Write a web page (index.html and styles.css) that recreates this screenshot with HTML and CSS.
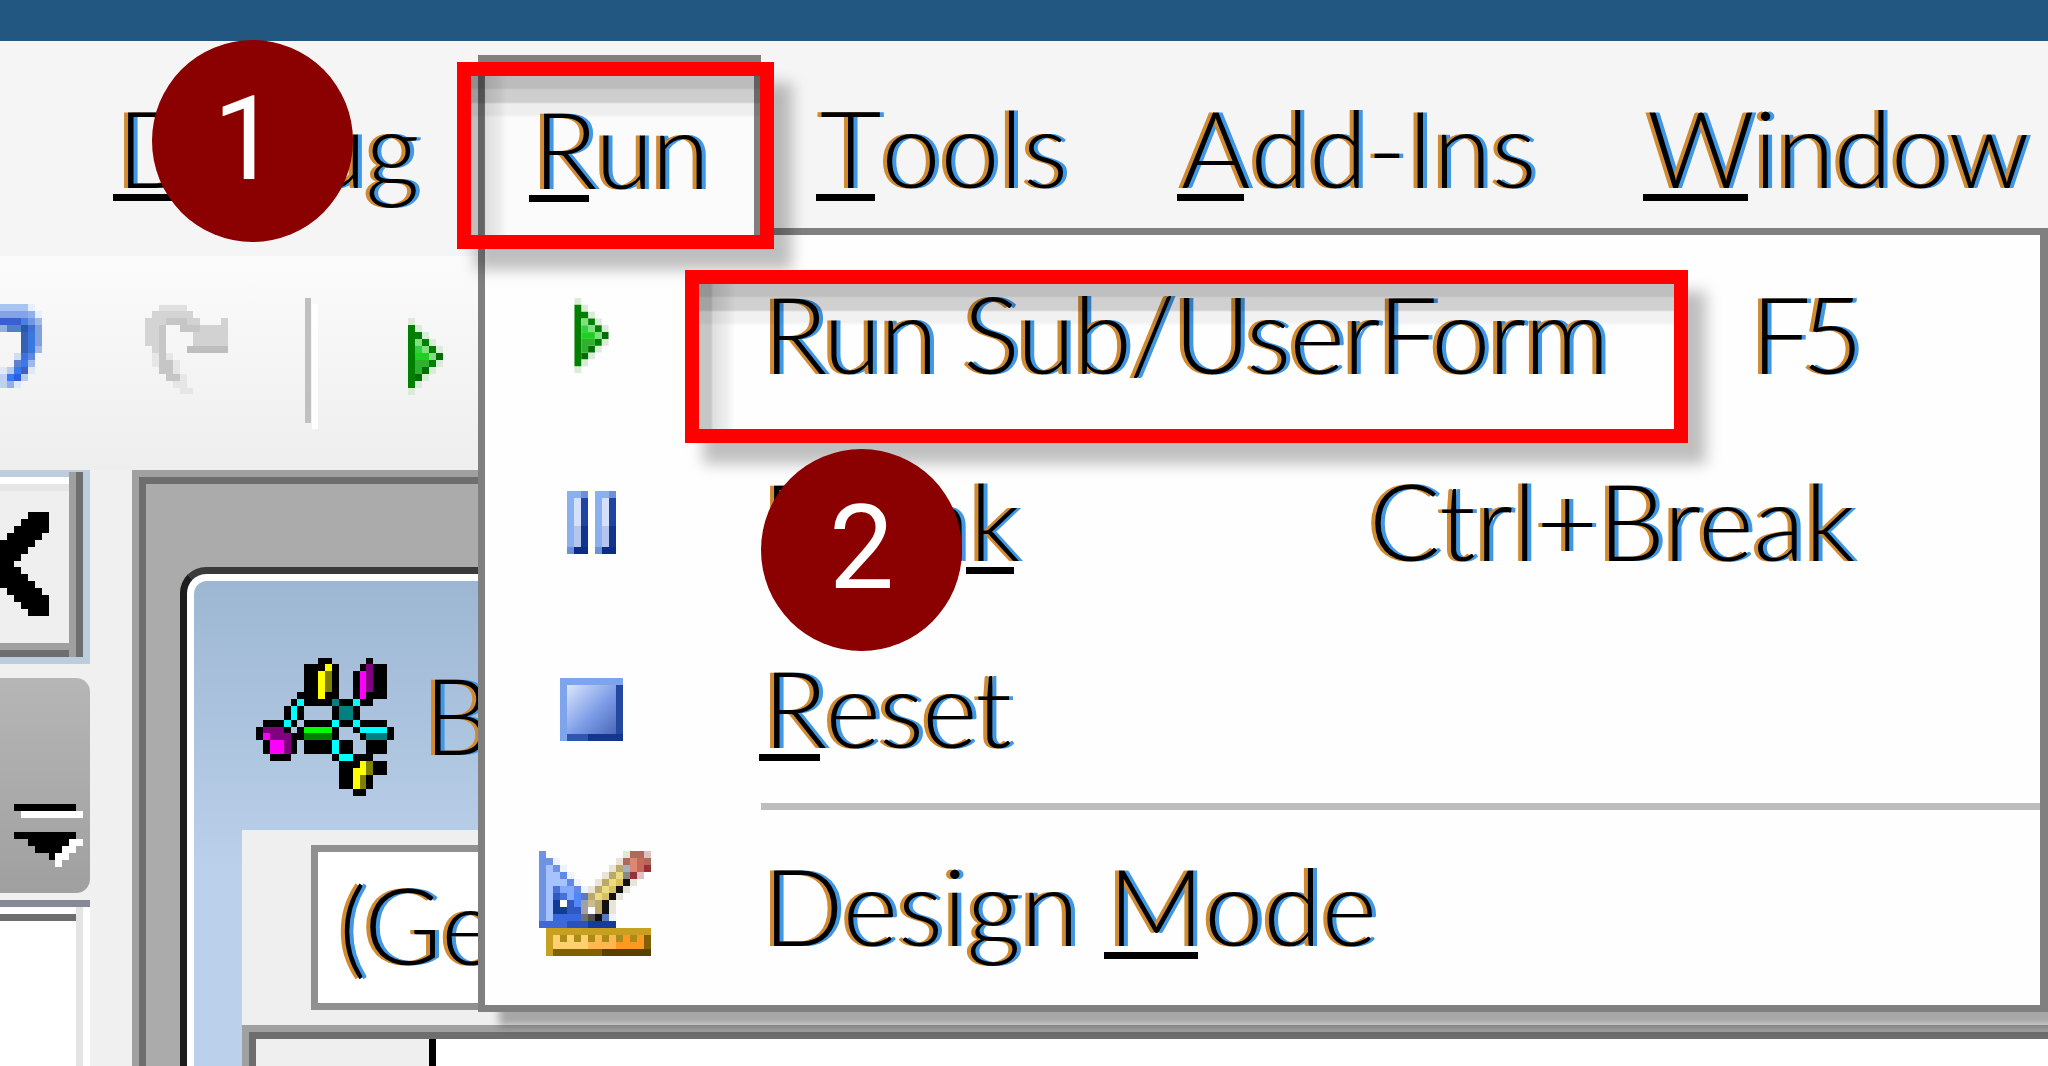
FILE: index.html
```html
<!DOCTYPE html>
<html lang="en">
<head>
<meta charset="utf-8">
<title>VBA Run menu</title>
<link rel="stylesheet" href="styles.css">
</head>
<body>
<svg class="defs" width="0" height="0" aria-hidden="true">
  <defs>
    <symbol id="play" viewBox="0 0 5 11">
      <path fill="#d8ecd8" d="M0 0h1v1H0zM1 1h1v1H1zM2 2h1v1H2zM3 3h1v1H3zM4 4h1v1H4zM4 6h1v1H4zM3 7h1v1H3zM2 8h1v1H2zM1 9h1v1H1zM0 10h1v1H0z"/>
      <path fill="#008000" d="M0 1h1v9H0zM1 2h1v1H1zM2 3h1v1H2zM3 4h1v1H3zM3 6h1v1H3z"/>
      <path fill="#006f00" d="M4 5h1v1H4zM2 7h1v1H2zM1 8h1v1H1z"/>
      <path fill="#80e080" d="M1 3h1v1H1zM2 4h1v1H2zM3 5h1v1H3z"/>
      <path fill="#30d040" d="M1 4h1v1H1z"/>
      <path fill="#20d020" d="M1 5h2v1H1z"/>
      <path fill="#30b030" d="M1 6h2v1H1zM1 7h1v1H1z"/>
    </symbol>
    <symbol id="pausebar" viewBox="0 0 3 9">
      <path fill="#8ab0f0" d="M0 0h2v8H0z"/>
      <path fill="#6f90d8" d="M0 8h1v1H0zM2 0h1v1H2z"/>
      <path fill="#d4e0fa" d="M1 1h1v4H1z"/>
      <path fill="#b4c6f0" d="M1 5h1v3H1z"/>
      <path fill="#1c44a0" d="M2 1h1v4H2z"/>
      <path fill="#12348c" d="M2 5h1v3H2z"/>
      <path fill="#0c2c88" d="M1 8h2v1H1z"/>
    </symbol>
    <linearGradient id="stopfill" x1="0" y1="0" x2="1" y2="1">
      <stop offset="0" stop-color="#dce6fc"/>
      <stop offset="0.55" stop-color="#7f9ee8"/>
      <stop offset="1" stop-color="#4a68b8"/>
    </linearGradient>
  </defs>
</svg>

<div class="app">
  <header class="titlebar"></header>

  <nav class="menubar">
    <div class="menubar-item menubar-debug"><span class="key">D</span>ebug</div>
    <div class="menubar-item menubar-item-open"><span class="key">R</span>un</div>
    <div class="menubar-item menubar-tools"><span class="key">T</span>ools</div>
    <div class="menubar-item menubar-addins"><span class="key">A</span>dd-Ins</div>
    <div class="menubar-item menubar-window"><span class="key">W</span>indow</div>
  </nav>

  <div class="toolbar">
    <svg class="tool-undo" viewBox="0 0 6 12" shape-rendering="crispEdges">
      <path fill="#a8c4f0" d="M0 0h4v1H0z"/><path fill="#e8f0ff" d="M4 0h1v1H4zM5 1h1v1H5z"/>
      <path fill="#84a2e8" d="M0 1h4v1H0z"/><path fill="#90b0f0" d="M4 1h1v1H4z"/>
      <path fill="#3a60d0" d="M0 2h3v1H0z"/><path fill="#4880e8" d="M3 2h1v1H3z"/><path fill="#7098e0" d="M4 2h1v1H4z"/><path fill="#a0b8e8" d="M5 2h1v1H5zM5 6h1v1H5zM4 8h1v1H4z"/>
      <path fill="#90b0e0" d="M0 3h1v1H0z"/><path fill="#5080c8" d="M1 3h2v1H1z"/><path fill="#2858a8" d="M3 3h1v1H3z"/><path fill="#4070d0" d="M4 3h1v1H4z"/>
      <path fill="#80a0e0" d="M5 3h1v3H5z"/><path fill="#3860b0" d="M3 4h1v3H3z"/><path fill="#3878e0" d="M4 4h1v3H4z"/>
      <path fill="#4070e0" d="M3 7h1v1H3z"/><path fill="#6088e0" d="M4 7h1v1H4z"/><path fill="#d0dcf0" d="M2 7h1v1H2z"/>
      <path fill="#6080d0" d="M2 8h1v1H2z"/><path fill="#3878f0" d="M3 8h1v1H3zM2 9h1v1H2zM1 10h1v1H1z"/>
      <path fill="#e0e8f8" d="M0 9h1v1H0zM4 9h1v1H4zM2 11h1v1H2z"/><path fill="#b8cce8" d="M1 9h1v1H1zM3 10h1v1H3z"/><path fill="#4060c0" d="M3 9h1v1H3z"/>
      <path fill="#c0d0f0" d="M0 10h1v2H0z"/><path fill="#2860d8" d="M2 10h1v1H2z"/><path fill="#90b0e8" d="M1 11h1v1H1z"/>
    </svg>
    <svg class="tool-redo" viewBox="0 0 12 13" shape-rendering="crispEdges">
      <path fill="#e0e0e0" d="M2 0h4v1H2z"/>
      <path fill="#d4d4d4" d="M1 1h6v1H1zM1 2h2v5H1zM0 2h1v4H0z"/>
      <path fill="#c6c6c6" d="M3 2h3v1H3zM2 3h1v5H2zM5 3h3v1H5zM2 8h2v2H2zM3 10h2v1H3z"/>
      <path fill="#d2d2d2" d="M6 2h2v1H6zM8 3h3v1H8zM7 4h5v2H7zM11 2h1v2h-1z"/>
      <path fill="#bebebe" d="M6 6h6v1H6z"/>
      <path fill="#e6e6e6" d="M1 7h1v1H1zM3 7h1v1H3zM1 8h1v1H1zM4 8h1v2H4zM5 10h1v1H5zM4 11h2v1H4zM5 12h2v1H5z"/>
    </svg>
    <div class="tool-sep"></div>
    <svg class="tool-play"><use href="#play"/></svg>
  </div>

  <div class="workspace">
    <aside class="sidebar">
      <div class="side-button">
        <svg class="side-chevron" viewBox="0 0 147 313" shape-rendering="crispEdges">
          <path d="M83 1h63v61h-21v21h-21v21H83v21H62v21H41v21h21v21h21v21h21v21h21v21h21v61H83v-20H62v-21H41v-21H20v-21H0V85h20V63h21V43h21V22h21z"/>
        </svg>
      </div>
      <div class="side-drop">
        <svg class="side-drop-icon" viewBox="0 0 208 208" shape-rendering="crispEdges">
          <path d="M0 0h187v21H0zM0 84h187v21h-21v21h-21v21h-21v21h-20v-21H63v-21H42v-21H21V105H0z"/>
          <path fill="#fff" d="M21 21h187v21H21zM166 105h42v21h-21v21h-21v21h-21v21h-21v-41h21v-21h21z"/>
        </svg>
      </div>
      <div class="side-rule"></div>
      <div class="side-list"><div class="side-list-head"></div></div>
    </aside>

    <main class="mdi">
      <section class="code-window">
        <div class="code-inner">
          <div class="code-title">
            <svg class="vba-icon" viewBox="0 0 20 20" shape-rendering="crispEdges">
              <path d="M9 0h2v1H9zM16 0h1v1h-1zM7 1h3v1H7zM11 1h1v1h-1zM15 1h1v1h-1zM17 1h2v1h-2zM7 2h2v3H7zM11 2h1v3h-1zM14 2h1v3h-1zM17 2h2v3h-2zM6 5h3v1H6zM10 5h2v1h-2zM14 5h1v1h-1zM16 5h3v1h-3zM5 6h1v1H5zM7 6h4v1H7zM12 6h2v1h-2zM15 6h2v1h-2zM4 7h1v2H4zM6 7h1v2H6zM11 7h1v2h-1zM14 7h1v2h-1zM1 9h3v1H1zM5 9h1v1H5zM7 9h4v1H7zM12 9h2v1h-2zM15 9h4v1h-4zM0 10h1v2H0zM4 10h1v1H4zM6 10h1v2H6zM11 10h1v2h-1zM14 10h1v1h-1zM19 10h1v2h-1zM5 11h1v3H5zM15 11h1v1h-1zM1 12h1v2H1zM7 12h4v2H7zM12 12h2v2h-2zM16 12h3v2h-3zM2 14h3v1H2zM11 14h1v1h-1zM14 14h3v1h-3zM12 15h3v1h-3zM17 15h2v2h-2zM12 16h2v3h-2zM16 17h1v2h-1zM14 19h2v1h-2z"/>
              <path fill="#ffff00" d="M10 1h1v1h-1zM9 2h1v4H9zM15 15h1v1h-1zM14 16h2v1h-2zM14 17h1v2h-1z"/>
              <path fill="#808000" d="M10 2h1v3h-1zM16 15h1v2h-1zM15 17h1v2h-1z"/>
              <path fill="#ff00ff" d="M15 2h1v4h-1zM1 11h1v1H1zM2 12h2v2H2z"/>
              <path fill="#800080" d="M16 1h1v4h-1zM1 10h3v1H1zM2 11h3v1H2zM4 12h1v2H4z"/>
              <path fill="#00ffff" d="M6 6h1v1H6zM14 6h1v1h-1zM5 7h1v2H5zM4 9h1v1H4zM11 9h1v1h-1zM14 9h1v1h-1zM15 10h4v1h-4zM11 12h1v2h-1zM12 14h2v1h-2z"/>
              <path fill="#008080" d="M11 6h1v1h-1zM12 7h2v2h-2zM16 11h3v1h-3z"/>
              <path fill="#00ff00" d="M7 10h4v1H7z"/>
              <path fill="#008000" d="M7 11h4v1H7z"/>
            </svg>
            <span class="code-name">Book1 - Module1 (Code)</span>
          </div>
          <div class="code-client">
            <div class="combo">(General)</div>
            <div class="code-pane">
              <div class="code-margin"></div>
              <div class="code-text"></div>
            </div>
          </div>
        </div>
      </section>
    </main>
  </div>

  <div class="dropdown">
    <div class="drop-row">
      <svg class="drop-icon drop-icon-play"><use href="#play"/></svg>
      <span class="drop-label drop-label-tight">Run Sub/UserForm</span>
      <span class="drop-short drop-short-f5">F5</span>
    </div>
    <div class="drop-row">
      <svg class="drop-icon drop-icon-pause" viewBox="0 0 7 9" shape-rendering="crispEdges">
        <use href="#pausebar" x="0" y="0" width="3" height="9"/>
        <use href="#pausebar" x="4" y="0" width="3" height="9"/>
      </svg>
      <span class="drop-label">Brea<span class="key">k</span></span>
      <span class="drop-short drop-short-break">Ctrl+Break</span>
    </div>
    <div class="drop-row">
      <svg class="drop-icon drop-icon-stop" viewBox="0 0 9 9" shape-rendering="crispEdges">
        <path fill="#7fa4ee" d="M0 0h9v1H1v8H0z"/>
        <rect x="1" y="1" width="7" height="7" fill="url(#stopfill)"/>
        <path fill="#24479f" d="M8 1h1v7H8z"/>
        <path fill="#2f55b2" d="M1 8h3v1H1z"/>
        <path fill="#16358f" d="M4 8h5v1H4z"/>
      </svg>
      <span class="drop-label drop-label-tight"><span class="key">R</span>eset</span>
    </div>
    <div class="drop-sep"></div>
    <div class="drop-row drop-row-last">
      <svg class="drop-icon drop-icon-design" viewBox="0 0 16 15" shape-rendering="crispEdges">
        <path fill="#6f93e4" d="M0 0h1v10H0zM1 1h1v1H1zM2 2h1v1H2z"/>
        <path fill="#a6c2ff" d="M1 2h1v8H1zM2 3h1v2H2zM3 4h1v1H3z"/>
        <path fill="#eef2fe" d="M2 1h1v1H2zM3 2h1v1H3zM4 3h1v1H4zM5 4h1v1H5zM6 5h1v1H6zM10 9h1v1h-1z"/>
        <path fill="#5f88e8" d="M3 3h1v1H3zM4 4h1v1H4zM5 5h1v1H5z"/>
        <path fill="#4870d8" d="M2 5h1v1H2zM3 6h1v1H3z"/>
        <path fill="#82aaff" d="M3 5h2v1H3zM4 6h1v1H4z"/>
        <path fill="#3058c0" d="M2 6h1v1H2zM4 7h1v2H4zM5 8h1v1H5z"/>
        <path fill="#103c98" d="M2 7h1v2H2zM3 8h1v1H3z"/>
        <path fill="#fff" d="M3 7h1v1H3zM7 8h1v1H7z"/>
        <path fill="#5088f8" d="M5 6h1v2H5z"/>
        <path fill="#3868e0" d="M2 9h4v1H2z"/>
        <path fill="#3e68d8" d="M0 10h4v1H0z"/>
        <path fill="#2a52b8" d="M4 10h3v1H4z"/>
        <path fill="#143c98" d="M7 10h4v1H7z"/>
        <path fill="#5878c0" d="M6 6h1v1H6zM9 9h1v1H9z"/>
        <path fill="#a0a0a8" d="M6 7h1v2H6z"/>
        <path fill="#707070" d="M6 9h1v1H6z"/><path fill="#505050" d="M7 9h1v1H7z"/>
        <path fill="#e8e4d8" d="M7 5h1v1H7zM8 4h1v1H8zM9 3h1v1H9zM10 2h1v1h-1zM11 1h1v1h-1zM12 0h1v1h-1zM12 5h1v1h-1zM11 6h1v1h-1zM10 7h1v2h-1zM13 4h1v1h-1z"/>
        <path fill="#bca868" d="M8 5h1v1H8zM9 4h1v1H9zM10 3h1v1h-1zM11 2h1v1h-1zM7 6h1v1H7zM8 7h1v2H8z"/>
        <path fill="#ecdc80" d="M9 5h1v1H9zM10 4h1v1h-1zM11 3h1v1h-1zM8 6h1v1H8z"/>
        <path fill="#d8c060" d="M10 5h1v1h-1zM11 4h1v1h-1zM9 6h1v1H9z"/>
        <path fill="#c8bc90" d="M7 7h1v1H7z"/>
        <path fill="#111" d="M12 4h1v1h-1zM11 5h1v1h-1zM10 6h1v1h-1zM9 7h1v2H9zM8 9h1v1H8z"/>
        <path fill="#a8b0c0" d="M12 2h1v1h-1z"/>
        <path fill="#888" d="M12 3h1v1h-1z"/>
        <path fill="#b06858" d="M13 0h2v1h-2zM12 1h1v1h-1zM15 1h1v1h-1z"/>
        <path fill="#dc8870" d="M13 1h1v2h-1z"/>
        <path fill="#c86858" d="M14 1h1v2h-1z"/>
        <path fill="#983038" d="M15 2h1v1h-1zM13 3h1v1h-1z"/>
        <path fill="#e0c0c0" d="M14 3h1v1h-1zM15 0h1v1h-1z"/>
        <path fill="#c8a020" d="M1 11h15v1H1zM1 12h1v3H1z"/>
        <path fill="#ac8c18" d="M3 12h1v1H3zM5 12h1v1H5zM7 12h1v1H7zM9 12h1v1H9zM11 12h1v1h-1zM13 12h1v1h-1z"/>
        <path fill="#ffd070" d="M2 12h1v1H2zM4 12h1v1H4zM6 12h1v1H6zM2 13h5v1H2z"/>
        <path fill="#ffb850" d="M8 12h1v1H8zM10 12h1v1h-1zM7 13h4v1H7z"/>
        <path fill="#ff9820" d="M12 12h1v1h-1zM14 12h1v1h-1zM11 13h4v1h-4z"/>
        <path fill="#806000" d="M15 12h1v2h-1zM2 14h7v1H2z"/>
        <path fill="#584000" d="M9 14h7v1H9z"/>
      </svg>
      <span class="drop-label">Design <span class="key">M</span>ode</span>
    </div>
  </div>

  <div class="callout callout-menu"></div>
  <div class="callout callout-item"></div>
  <div class="step step-one">1</div>
  <div class="step step-two">2</div>
</div>
</body>
</html>
```
FILE: styles.css
```css
html, body { margin: 0; padding: 0; }
body { background: #f0f0f0; }
.defs { position: absolute; }

.app {
  position: relative;
  width: 2048px;
  height: 1066px;
  overflow: hidden;
  display: flex;
  flex-direction: column;
  font-family: "Lato", "Liberation Sans", sans-serif;
  font-size: 106px;
  font-weight: 300;
  color: #000;
  text-shadow: -4px 0 0 #d08a30, 4px 0 0 #3f97e6;
}

.titlebar { height: 41px; flex: none; background: #225782; }

.menubar {
  height: 215px;
  flex: none;
  box-sizing: border-box;
  display: flex;
  align-items: flex-start;
  padding-left: 62px;
  background: #f5f5f5;
}
.menubar-item {
  box-sizing: border-box;
  flex: none;
  padding-left: 55px;
  margin-top: 53px;
  line-height: 106px;
  white-space: nowrap;
}
.menubar-debug { width: 416px; letter-spacing: -1px; }
.menubar-tools { width: 360px; padding-left: 59px; }
.menubar-addins { width: 471px; padding-left: 60px; }
.menubar-window { width: 456px; letter-spacing: -1px; }
.menubar-item-open {
  width: 283px;
  margin-top: 14px;
  height: 180px;
  padding: 33px 0 0 48px;
  border: 7px solid #808080;
  border-bottom: 0;
  background: #fbfbfb;
  letter-spacing: -2px;
  position: relative;
  z-index: 3;
}

.key { position: relative; }
.key::after {
  content: "";
  position: absolute;
  left: -4px;
  right: 6px;
  bottom: 10px;
  height: 7px;
  background: #000;
}

.toolbar {
  height: 214px;
  flex: none;
  display: flex;
  align-items: flex-start;
  background: linear-gradient(#fbfbfb, #eeeeee);
}
.tool-undo { width: 42px; height: 84px; margin-top: 48px; }
.tool-redo { width: 83px; height: 91px; margin: 48px 0 0 103px; }
.tool-sep {
  width: 6px;
  height: 125px;
  margin: 42px 0 0 77px;
  background: #c0c0c0;
  box-shadow: 7px 6px 0 #fff;
}
.tool-play { width: 35px; height: 77px; margin: 62px 0 0 97px; }

.workspace { flex: 1; display: flex; min-height: 0; background: #f0f0f0; }

.sidebar { width: 90px; flex: none; display: flex; flex-direction: column; }
.side-button {
  height: 185px;
  flex: none;
  position: relative;
  background: #efefef;
  border: solid #bccddd;
  border-width: 2px 0 7px;
  box-sizing: content-box;
  box-shadow: inset -7px 0 0 #bccddd, inset -14px 0 0 #6e6e6e, inset -21px 0 0 #a0a0a0, inset 0 -7px 0 #6e6e6e, inset 0 -14px 0 #a0a0a0, inset 0 5px 0 #bccddd, inset 0 12px 0 #fff, inset 0 19px 0 #e6e6e6;
}
.side-chevron { position: absolute; left: 0; top: 40px; width: 49px; height: 104px; }
.side-drop {
  height: 215px;
  flex: none;
  margin-top: 14px;
  position: relative;
  border-top-right-radius: 14px;
  border-bottom-right-radius: 14px;
  background: linear-gradient(#b6b6b6, #a0a0a0);
}
.side-drop-icon { position: absolute; left: 14px; top: 126px; width: 69px; height: 69px; }
.side-rule { height: 7px; flex: none; margin-top: 7px; background: #858a96; }
.side-list { flex: 1; background: #fff; padding: 7px 14px 0 0; box-shadow: inset -7px 0 0 #fff, inset -14px 0 0 #e4e4e4; }
.side-list-head { height: 7px; background: #6e6e6e; }

.mdi {
  flex: 1;
  min-width: 0;
  margin-left: 42px;
  padding: 90px 0 0 41px;
  background: #ababab;
  border-style: solid;
  border-color: #a0a0a0;
  border-width: 7px 0 0 7px;
  box-shadow: inset 7px 7px 0 #6e6e6e;
}
.code-window {
  height: 100%;
  box-sizing: border-box;
  border-top: 7px solid #3a3a3a;
  border-left: 7px solid #1d1d1d;
  border-top-left-radius: 26px;
  background: linear-gradient(#9cb6d2, #bbd0ea 60%);
  overflow: hidden;
}
.code-inner {
  height: 100%;
  box-sizing: border-box;
  border-top: 7px solid #fff;
  border-left: 7px solid #fff;
  border-top-left-radius: 20px;
  padding-left: 48px;
  display: flex;
  flex-direction: column;
}
.code-title {
  height: 249px;
  flex: none;
  display: flex;
  align-items: flex-start;
  margin-left: -48px;
  padding-left: 62px;
  white-space: nowrap;
}
.vba-icon { width: 138px; height: 139px; flex: none; margin-top: 76px; }
.code-name { margin: 80px 0 0 30px; line-height: 106px; }
.code-client { flex: 1; background: #efefef; min-height: 0; display: flex; flex-direction: column; }
.combo {
  height: 151px;
  flex: none;
  margin: 15px 0 0 69px;
  padding-left: 21px;
  border: 7px solid #909090;
  border-right: 0;
  background: #fff;
  line-height: 145px;
  white-space: nowrap;
}
.code-pane {
  flex: 1;
  display: flex;
  margin-top: 15px;
  border-style: solid;
  border-color: #a0a0a0;
  border-width: 7px 0 0 7px;
  box-shadow: inset 7px 7px 0 #6e6e6e;
  padding: 7px 0 0 7px;
}
.code-margin { width: 173px; flex: none; background: #efefef; border-right: 7px solid #000; }
.code-text { flex: 1; background: #fff; }

.dropdown {
  position: absolute;
  left: 478px;
  top: 228px;
  width: 1570px;
  height: 784px;
  box-sizing: border-box;
  padding-top: 7px;
  border: 7px solid #808080;
  border-right-width: 8px;
  background: #fefefe;
  box-shadow: 21px 14px 8px rgba(0, 0, 0, 0.3);
  display: flex;
  flex-direction: column;
  z-index: 2;
}
.drop-row {
  height: 187px;
  flex: none;
  box-sizing: border-box;
  position: relative;
  display: flex;
  align-items: center;
  padding: 0 0 6px 278px;
  white-space: nowrap;
}
.drop-row-last { flex: 1; height: auto; }
.drop-icon { position: absolute; }
.drop-icon-play { left: 89px; top: 56px; width: 35px; height: 75px; }
.drop-icon-pause { left: 82px; top: 62px; width: 49px; height: 63px; }
.drop-icon-stop { left: 75px; top: 62px; width: 63px; height: 63px; }
.drop-icon-design { left: 54px; top: 41px; width: 112px; height: 105px; }
.drop-label { line-height: 106px; }
.drop-label-tight { letter-spacing: -1.8px; }
.drop-short { position: absolute; line-height: 106px; }
.drop-short-f5 { left: 1266px; letter-spacing: -9px; }
.drop-short-break { left: 884px; }
.drop-sep { height: 7px; flex: none; margin-left: 276px; background: #bdbdbd; }

.callout {
  position: absolute;
  box-sizing: border-box;
  border: 14px solid #ff0000;
  z-index: 4;
  box-shadow: 18px 21px 14px rgba(0, 0, 0, 0.25);
  background-image:
    linear-gradient(to bottom, rgba(0,0,0,0.25) 0, rgba(0,0,0,0.25) 12px, rgba(0,0,0,0.18) 14px, rgba(0,0,0,0.18) 26px, rgba(0,0,0,0.05) 28px, rgba(0,0,0,0.05) 38px, transparent 42px),
    linear-gradient(to right, rgba(0,0,0,0.22) 0, rgba(0,0,0,0.22) 12px, rgba(0,0,0,0.12) 14px, rgba(0,0,0,0.06) 28px, transparent 36px);
}
.callout-menu { left: 457px; top: 62px; width: 317px; height: 187px; }
.callout-item { left: 685px; top: 270px; width: 1003px; height: 173px; }

.step {
  position: absolute;
  z-index: 5;
  width: 201px;
  height: 202px;
  border-radius: 50%;
  background: #8b0000;
  color: #fff;
  font-family: "Roboto", "Liberation Sans", sans-serif;
  font-size: 116px;
  font-weight: 400;
  line-height: 198px;
  text-align: center;
  text-shadow: none;
}
.step-one { left: 152px; top: 40px; padding-right: 0; text-indent: -14px; }
.step-two { left: 761px; top: 449px; }
```
